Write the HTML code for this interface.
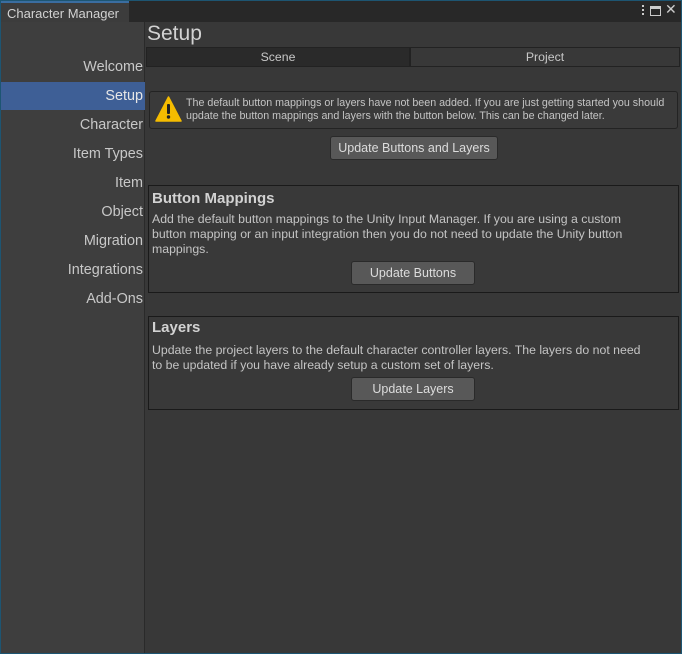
<!DOCTYPE html>
<html><head><style>
*{box-sizing:border-box;margin:0;padding:0}
body{width:682px;height:654px;background:#383838;font-family:"Liberation Sans",sans-serif;color:#c4c4c4;position:relative;overflow:hidden}
.abs{position:absolute}
.topbar{left:0;top:0;width:682px;height:22px;background:#282828;border-top:1px solid #1d5572}
.tab{left:1px;top:1px;width:128px;height:22px;background:#3c3c3c;border-top:2px solid #3a6da0;font-size:13px;color:#d2d2d2;padding:3px 0 0 6px}
.side{left:1px;top:22px;width:144px;height:632px;background:#3e3e3e;border-right:1px solid #2a2a2a}
.item{position:absolute;right:2px;font-size:14.4px;color:#c8c8c8;text-align:right}
.sel{left:1px;top:82px;width:144px;height:28px;background:#3e5f96}
.edge{left:0;top:0;width:1px;height:654px;background:#1d5572}
.btn{position:absolute;background:#585858;border:1px solid #2a2a2a;border-radius:3px;font-size:12.5px;color:#dcdcdc;text-align:center;line-height:22px}
.box{position:absolute;left:148px;width:531px;border:1px solid #1a1a1a;background:#393939}
.box h2{position:absolute;left:3px;font-size:15px;font-weight:bold;color:#d2d2d2}
.box p{position:absolute;left:3px;font-size:12.3px;line-height:15px;color:#c4c4c4}
</style></head><body>
<div class="abs topbar"></div>
<div class="abs tab">Character Manager</div>
<div class="abs" style="right:38px;top:5px;width:2px;height:11px;background:linear-gradient(#ccc 0 2px,transparent 2px 4px,#ccc 4px 6px,transparent 6px 8px,#ccc 8px 10px,transparent 10px)"></div>
<div class="abs" style="left:650px;top:6px;width:11px;height:10px;border:1px solid #ccc;border-top:3px solid #ccc"></div>
<div class="abs" style="left:665px;top:1px;font-size:14px;color:#ccc">✕</div>
<div class="abs side"></div>
<div class="abs sel"></div>
<div class="abs" style="left:0;top:59px;width:145px">
<div class="item" style="top:0px">Welcome</div>
<div class="item" style="top:29px;color:#e6e6e6">Setup</div>
<div class="item" style="top:58px">Character</div>
<div class="item" style="top:87px">Item Types</div>
<div class="item" style="top:116px">Item</div>
<div class="item" style="top:145px">Object</div>
<div class="item" style="top:174px">Migration</div>
<div class="item" style="top:203px">Integrations</div>
<div class="item" style="top:232px">Add-Ons</div>
</div>
<div class="abs edge"></div>
<div class="abs" style="left:147px;top:22px;font-size:21px;color:#d2d2d2">Setup</div>
<div class="abs" style="left:146px;top:47px;width:264px;height:20px;background:#2a2a2a;border:1px solid #222;font-size:12.3px;text-align:center;line-height:19px;color:#c8c8c8">Scene</div>
<div class="abs" style="left:410px;top:47px;width:270px;height:20px;background:#383838;border:1px solid #222;font-size:12.3px;text-align:center;line-height:19px;color:#c8c8c8">Project</div>
<div class="abs" style="left:149px;top:91px;width:529px;height:38px;background:#3a3a3a;border:1px solid #232323;border-radius:3px"></div>
<svg class="abs" style="left:155px;top:96px" width="27" height="26" viewBox="0 0 27 26"><path d="M13.5 1 L26 25 L1 25 Z" fill="#f5bc00" stroke="#f5bc00" stroke-linejoin="round" stroke-width="1.5"/><rect x="12" y="8" width="3" height="10" rx="1" fill="#222"/><circle cx="13.5" cy="21" r="1.7" fill="#222"/></svg>
<div class="abs" style="left:186px;top:97px;font-size:10.7px;line-height:12.5px;color:#c4c4c4;width:490px">The default button mappings or layers have not been added. If you are just getting started you should update the button mappings and layers with the button below. This can be changed later.</div>
<div class="btn" style="left:330px;top:136px;width:168px;height:24px">Update Buttons and Layers</div>
<div class="box" style="top:185px;height:108px">
<h2 style="top:4px">Button Mappings</h2>
<p style="top:26px;width:490px">Add the default button mappings to the Unity Input Manager. If you are using a custom button mapping or an input integration then you do not need to update the Unity button mappings.</p>
<div class="btn" style="left:202px;top:75px;width:124px;height:24px">Update Buttons</div>
</div>
<div class="box" style="top:316px;height:94px">
<h2 style="top:2px">Layers</h2>
<p style="top:26px;width:498px">Update the project layers to the default character controller layers. The layers do not need to be updated if you have already setup a custom set of layers.</p>
<div class="btn" style="left:202px;top:60px;width:124px;height:24px">Update Layers</div>
</div>
<div class="abs" style="left:681px;top:0;width:1px;height:654px;background:#1d5572"></div>
<div class="abs" style="left:0;top:653px;width:682px;height:1px;background:#1d5572"></div>
</body></html>
